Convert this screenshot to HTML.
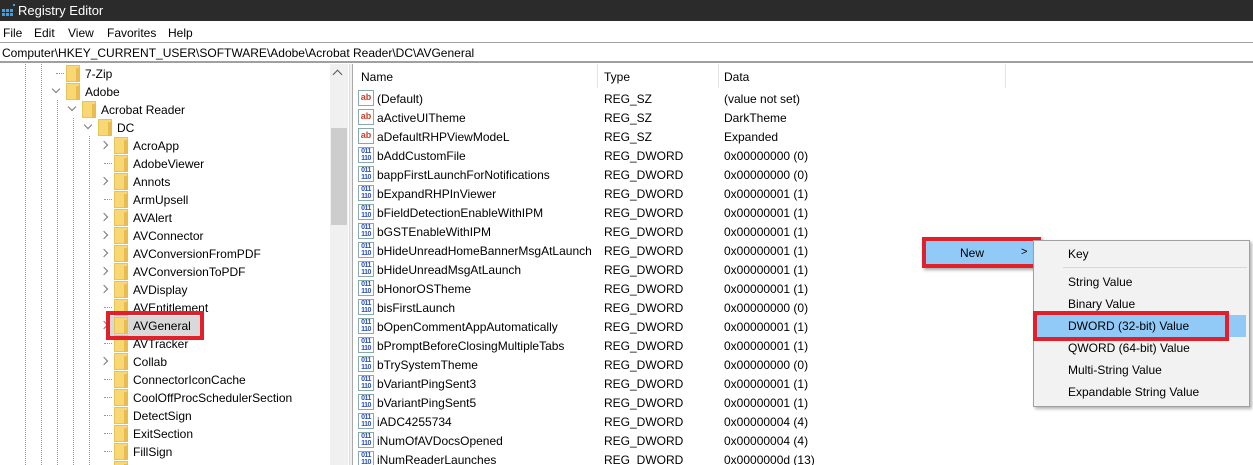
<!DOCTYPE html>
<html><head><meta charset="utf-8">
<style>
*{margin:0;padding:0;box-sizing:border-box}
html,body{width:1253px;height:465px;overflow:hidden}
body{background:#fff;font-family:"Liberation Sans",sans-serif;font-size:12px;color:#000;position:relative}
.a{position:absolute;white-space:nowrap}
#title{left:0;top:0;width:1253px;height:21px;background:#2b2b2b;color:#fff;font-size:13px}
#menu{left:0;top:21px;width:1253px;height:21px;background:#fff}
#addr{left:0;top:42px;width:1253px;height:21px;border-top:1px solid #a0a0a0;border-bottom:2px solid #a0a0a0;background:#fff}
.t{height:18px;line-height:18px}
.fold{position:absolute;width:14px;height:17px;background:#f8d775;border:1px solid #e7c35a}
.fold:after{content:"";position:absolute;right:-1px;bottom:-1px;width:4px;height:14px;background:#e9bd4d}
.chev{position:absolute;width:6px;height:6px;border-right:1.4px solid #777;border-bottom:1.4px solid #777}
.r{height:19px;line-height:19px}
.ic{position:absolute;width:16px;height:16px;border:1px solid #8aa;background:#fff;font-size:9px;line-height:13px;text-align:center;font-weight:bold}
.sz{color:#c8412a}
.dw{color:#2a4fb8;font-size:7px;line-height:7px;letter-spacing:-0.5px}
.mi{height:22px;line-height:22px;left:1068px}
</style></head><body>
<div id="title" class="a">
 <svg class="a" style="left:2px;top:4px" width="14" height="14"><g fill="#3aa0e8"><rect x="0" y="5" width="3" height="3"/><rect x="4" y="5" width="3" height="3"/><rect x="8" y="5" width="3" height="3"/><rect x="0" y="9" width="3" height="3"/><rect x="4" y="9" width="3" height="3"/><rect x="8" y="9" width="3" height="3"/><rect x="11" y="0" width="2" height="2"/></g></svg>
 <span class="a" style="left:18px;top:3px">Registry Editor</span>
</div>
<div id="menu" class="a"><span class="a" style="left:3px;top:5px">File</span><span class="a" style="left:34px;top:5px">Edit</span><span class="a" style="left:68px;top:5px">View</span><span class="a" style="left:107px;top:5px">Favorites</span><span class="a" style="left:168px;top:5px">Help</span></div>
<div id="addr" class="a"><span class="a" style="left:2px;top:3px">Computer\HKEY_CURRENT_USER\SOFTWARE\Adobe\Acrobat Reader\DC\AVGeneral</span></div>

<div class="a" style="left:25px;top:64px;height:401px;border-left:1px dotted #999"></div>
<div class="a" style="left:41px;top:64px;height:401px;border-left:1px dotted #999"></div>
<div class="a" style="left:330px;top:64px;width:18px;height:401px;background:#f0f0f0"></div>
<div class="a" style="left:331px;top:128px;width:16px;height:97px;background:#cdcdcd"></div>
<div class="a" style="left:334px;top:71px;width:7px;height:7px;border-left:1.4px solid #555;border-top:1.4px solid #555;transform:rotate(45deg)"></div>
<div class="a" style="left:349px;top:64px;width:4px;height:401px;background:#f0f0f0;border-left:1px solid #ddd;border-right:1px solid #aaa"></div>

<div id="tree"></div>

<span class="a" style="left:361px;top:70px">Name</span>
<span class="a" style="left:604px;top:70px">Type</span>
<span class="a" style="left:724px;top:70px">Data</span>
<div class="a" style="left:597px;top:64px;height:24px;border-left:1px solid #e5e5e5"></div>
<div class="a" style="left:718px;top:64px;height:24px;border-left:1px solid #e5e5e5"></div>
<div class="a" style="left:1005px;top:64px;height:24px;border-left:1px solid #e5e5e5"></div>
<div id="vals"></div>

<div class="a" style="left:922px;top:237px;width:119px;height:31px;background:#91c9f7;border:4px solid #e0202a;box-shadow:2px 2px 3px rgba(0,0,0,.35)"></div>
<span class="a" style="left:960px;top:246px">New</span>
<span class="a" style="left:1021px;top:246px;font-size:11px">&gt;</span>
<div class="a" style="left:1033px;top:240px;width:217px;height:167px;background:#f2f2f2;border:1px solid #a0a0a0;box-shadow:2px 2px 3px rgba(0,0,0,.3)"></div>
<div class="a" style="left:1063px;top:267px;width:184px;border-top:1px solid #d7d7d7"></div>
<div class="a" style="left:1035px;top:315px;width:211px;height:22px;background:#91c9f7"></div>
<div class="a" style="left:1033px;top:311px;width:196px;height:30px;border:4px solid #e0202a"></div>
<span class="a mi" style="top:243px">Key</span>
<span class="a mi" style="top:271px">String Value</span>
<span class="a mi" style="top:293px">Binary Value</span>
<span class="a mi" style="top:315px">DWORD (32-bit) Value</span>
<span class="a mi" style="top:337px">QWORD (64-bit) Value</span>
<span class="a mi" style="top:359px">Multi-String Value</span>
<span class="a mi" style="top:381px">Expandable String Value</span>

<script>
var T=document.getElementById('tree'),h='';
function row(y,fx,tx,txt,ch,dir){
 if(ch){h+='<div class="chev" style="left:'+(ch)+'px;top:'+(y+(dir?4:6))+'px;transform:rotate('+(dir?45:-45)+'deg)"></div>';}
 else h+='<div class="a" style="left:'+(fx-10)+'px;top:'+(y+9)+'px;width:8px;border-top:1px dotted #999"></div>';
 h+='<div class="fold" style="left:'+fx+'px;top:'+(y+1)+'px"></div><span class="a t" style="left:'+tx+'px;top:'+(y+1)+'px">'+txt+'</span>';
}
row(64,66,85,'7-Zip',0);
row(82,66,85,'Adobe',53,1);
row(100,82,101,'Acrobat Reader',69,1);
row(118,98,117,'DC',85,1);
h+='<div class="a" style="left:57px;top:100px;height:365px;border-left:1px dotted #999"></div>';
h+='<div class="a" style="left:73px;top:118px;height:347px;border-left:1px dotted #999"></div>';
h+='<div class="a" style="left:89px;top:136px;height:329px;border-left:1px dotted #999"></div>';
h+='<div class="a" style="left:106px;top:316px;width:97px;height:22px;background:#d9d9d9"></div>';
var k=[['AcroApp',1],['AdobeViewer',0],['Annots',1],['ArmUpsell',0],['AVAlert',1],['AVConnector',1],['AVConversionFromPDF',1],['AVConversionToPDF',1],['AVDisplay',1],['AVEntitlement',0],['AVGeneral',1],['AVTracker',0],['Collab',1],['ConnectorIconCache',0],['CoolOffProcSchedulerSection',0],['DetectSign',0],['ExitSection',0],['FillSign',0],['',0]];
k.forEach(function(e,i){row(136+i*18,114,133,e[0],e[1]?101:0,0)});
h+='<div class="a" style="left:106px;top:311px;width:98px;height:29px;border:4px solid #e0202a"></div>';
T.innerHTML=h;
var V=[['(Default)','REG_SZ','(value not set)'],['aActiveUITheme','REG_SZ','DarkTheme'],['aDefaultRHPViewModeL','REG_SZ','Expanded'],['bAddCustomFile','REG_DWORD','0x00000000 (0)'],['bappFirstLaunchForNotifications','REG_DWORD','0x00000000 (0)'],['bExpandRHPInViewer','REG_DWORD','0x00000001 (1)'],['bFieldDetectionEnableWithIPM','REG_DWORD','0x00000001 (1)'],['bGSTEnableWithIPM','REG_DWORD','0x00000001 (1)'],['bHideUnreadHomeBannerMsgAtLaunch','REG_DWORD','0x00000001 (1)'],['bHideUnreadMsgAtLaunch','REG_DWORD','0x00000001 (1)'],['bHonorOSTheme','REG_DWORD','0x00000001 (1)'],['bisFirstLaunch','REG_DWORD','0x00000000 (0)'],['bOpenCommentAppAutomatically','REG_DWORD','0x00000001 (1)'],['bPromptBeforeClosingMultipleTabs','REG_DWORD','0x00000001 (1)'],['bTrySystemTheme','REG_DWORD','0x00000000 (0)'],['bVariantPingSent3','REG_DWORD','0x00000001 (1)'],['bVariantPingSent5','REG_DWORD','0x00000001 (1)'],['iADC4255734','REG_DWORD','0x00000004 (4)'],['iNumOfAVDocsOpened','REG_DWORD','0x00000004 (4)'],['iNumReaderLaunches','REG_DWORD','0x0000000d (13)']];
h='';
V.forEach(function(v,i){var y=89+i*19;
 h+=(v[1]=='REG_SZ'?'<div class="ic sz" style="left:358px;top:'+(y+1)+'px">ab</div>':'<div class="ic dw" style="left:358px;top:'+(y+1)+'px">011<br>110</div>');
 h+='<span class="a r" style="left:377px;top:'+(y+1)+'px">'+v[0]+'</span><span class="a r" style="left:604px;top:'+(y+1)+'px">'+v[1]+'</span><span class="a r" style="left:724px;top:'+(y+1)+'px">'+v[2]+'</span>';});
document.getElementById('vals').innerHTML=h;
</script>
</body></html>
